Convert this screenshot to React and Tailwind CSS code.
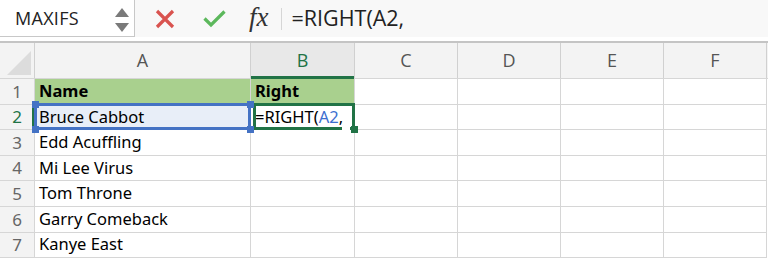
import React from "react";

const cols = ["A", "B", "C", "D", "E", "F"];
const widths = ["w-[216px]", "w-[104px]", "w-[103px]", "w-[103px]", "w-[103px]", "w-[103px]"];
const names = ["Bruce Cabbot", "Edd Acuffling", "Mi Lee Virus", "Tom Throne", "Garry Comeback", "Kanye East"];

function Handle({ className, color }) {
  return <div className={`absolute z-20 w-[7px] h-[7px] ${color} ${className}`} />;
}

export default function App() {
  const font = { fontFamily: '"Open Sans", "Noto Sans", sans-serif' };
  const cellFont = { fontFamily: '"Noto Sans", "Open Sans", sans-serif' };
  return (
    <div className="w-[768px] h-[259px] bg-white overflow-hidden select-none" style={font}>
      {/* Formula bar */}
      <div className="flex h-[41px] bg-white">
        <div className="w-[135px] h-[37px] bg-white border-r border-b border-[#c8c8c8] flex items-center relative">
          <span className="ml-[15px] text-[18px] text-[#222] tracking-[0.3px]">MAXIFS</span>
          <div className="absolute left-[115px] top-[8px] flex flex-col items-center gap-[6px]">
            <svg width="14" height="9" viewBox="0 0 14 9"><path d="M7 0 L14 9 L0 9 Z" fill="#7a7a7a" /></svg>
            <svg width="14" height="9" viewBox="0 0 14 9"><path d="M0 0 L14 0 L7 9 Z" fill="#7a7a7a" /></svg>
          </div>
        </div>
        <div className="flex-1 h-[37px] bg-[#f8f8f8] flex items-center">
          <svg className="ml-[20px]" width="20" height="20" viewBox="0 0 20 20">
            <path d="M2 2 L18 18 M18 2 L2 18" stroke="#d9534f" strokeWidth="3.2" strokeLinecap="butt" />
          </svg>
          <svg className="ml-[28px]" width="23" height="19" viewBox="0 0 23 19">
            <path d="M1.5 9.5 L8 16 L21.5 2.5" stroke="#5cb85c" strokeWidth="3.2" fill="none" />
          </svg>
          <span className="ml-[23px] text-[27px] italic text-[#333] leading-none -mt-[3px]" style={{ fontFamily: '"Liberation Serif", "DejaVu Serif", serif' }}>
            fx
          </span>
          <div className="ml-[12px] w-px h-[22px] bg-[#d6d6d6]" />
          <span className="ml-[10px] text-[21.5px] text-[#222]">=RIGHT(A2,</span>
        </div>
      </div>
      <div className="h-[2px] bg-[#c4c4c4]" />
      {/* Header row */}
      <div className="flex h-[36px] bg-[#f3f3f3] border-b border-[#d6d6d6]">
        <div className="w-[35px] h-full border-r border-[#d0d0d0] relative">
          <svg className="absolute right-[3px] bottom-[3px]" width="24" height="24" viewBox="0 0 24 24">
            <path d="M24 0 L24 24 L0 24 Z" fill="#dcdcdc" />
          </svg>
        </div>
        {cols.map((c, i) => (
          <div
            key={c}
            className={`${widths[i]} h-full border-r border-[#d0d0d0] flex items-center justify-center text-[18px] relative ${
              c === "B" ? "text-[#217346] bg-[#e8e8e8]" : "text-[#555]"
            }`}
          >
            {c}
            {c === "B" && <div className="absolute left-0 right-0 bottom-[-1px] h-[3px] bg-[#217346]" />}
          </div>
        ))}
      </div>
      {/* Rows */}
      {[1, 2, 3, 4, 5, 6, 7].map((r) => (
        <div key={r} className="flex h-[25.6px]" style={cellFont}>
          <div
            className={`w-[35px] h-full border-r border-b border-[#d6d6d6] bg-[#f3f3f3] flex items-center justify-center text-[17px] relative ${
              r === 2 ? "text-[#217346] bg-[#e8e8e8]" : "text-[#666]"
            }`}
          >
            {r}
            {r === 2 && <div className="absolute right-[-1px] top-0 bottom-0 w-[3px] bg-[#217346] z-10" />}
          </div>
          {cols.map((c, i) => {
            let content = null;
            let bg = "bg-white";
            if (r === 1 && c === "A") content = <b>Name</b>;
            if (r === 1 && c === "B") content = <b>Right</b>;
            if (r === 1 && (c === "A" || c === "B")) bg = "bg-[#a9d08e]";
            if (r >= 2 && c === "A") content = names[r - 2];
            if (r === 2 && c === "A") bg = "bg-[#e8eef8]";
            return (
              <div
                key={c}
                className={`${widths[i]} h-full border-r border-b border-[#d6d6d6] ${bg} flex items-center pl-[4px] text-[16.5px] text-black relative`}
              >
                {content}
                {r === 2 && c === "A" && (
                  <>
                    <div className="absolute z-10 left-[-1px] right-[-1px] top-[-2px] bottom-[-1px] border-[3px] border-[#4472c4] pointer-events-none" />
                    <Handle color="bg-[#4472c4]" className="left-[-3px] top-[-4px]" />
                    <Handle color="bg-[#4472c4]" className="right-[-4px] top-[-4px]" />
                    <Handle color="bg-[#4472c4]" className="left-[-3px] bottom-[-4px]" />
                    <Handle color="bg-[#4472c4]" className="right-[-4px] bottom-[-4px]" />
                  </>
                )}
                {r === 2 && c === "B" && (
                  <>
                    <div className="absolute z-10 left-[2px] right-[-1px] top-[-2px] bottom-[-1px] border-[3px] border-[#217346] pointer-events-none" />
                    <div className="absolute z-10 right-[4px] bottom-[-1px] w-[8px] h-[3px] bg-white" />
                    <Handle color="bg-[#217346]" className="right-[-4px] bottom-[-4px]" />
                    <span>
                      =RIGHT(<span className="text-[#3d6fd0]">A2</span>,
                    </span>
                  </>
                )}
              </div>
            );
          })}
        </div>
      ))}
    </div>
  );
}
